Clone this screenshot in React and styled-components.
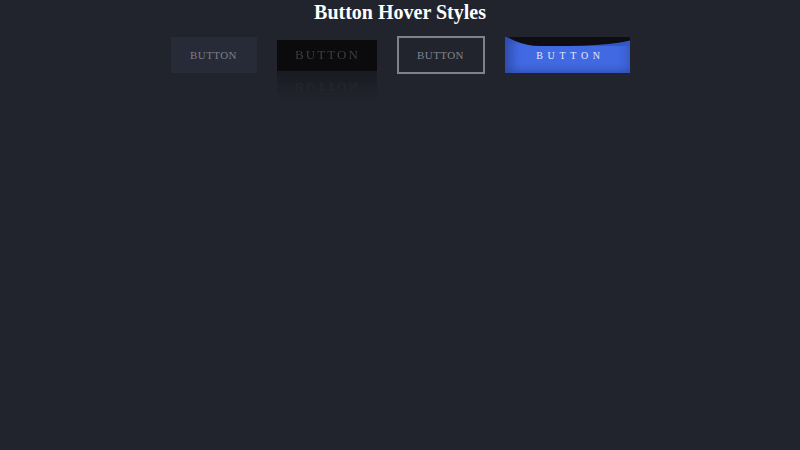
import React from "react";
import styled, { createGlobalStyle } from "styled-components";

const GlobalStyle = createGlobalStyle`
  html, body {
    margin: 0;
    padding: 0;
    background: #21242d;
  }
  body {
    font-family: "Liberation Serif", "Times New Roman", serif;
    width: 800px;
    height: 450px;
    overflow: hidden;
  }
`;

const Page = styled.main`
  display: flex;
  flex-direction: column;
  align-items: center;
`;

const Title = styled.h1`
  margin: 0;
  font-size: 20px;
  line-height: 24px;
  font-weight: 700;
  color: #ffffff;
`;

const Row = styled.div`
  display: flex;
  align-items: center;
  gap: 20px;
  margin-top: 12px;
  height: 38px;
`;

const BaseButton = styled.button`
  font-family: "Liberation Serif", "Times New Roman", serif;
  text-transform: uppercase;
  cursor: pointer;
  padding: 0;
  border: none;
  outline: none;
`;

/* flat, softly tinted tile */
const SoftButton = styled(BaseButton)`
  width: 86px;
  height: 36px;
  background: #272b37;
  color: #7b7e89;
  font-size: 11px;
  letter-spacing: 0.4px;
`;

/* black tile with a mirrored reflection underneath */
const MirrorButton = styled(BaseButton)`
  width: 100px;
  height: 31px;
  padding-left: 2px;
  background: #0b0b0d;
  color: #3d3e42;
  font-size: 13px;
  letter-spacing: 2.1px;
  -webkit-box-reflect: below 0px
    linear-gradient(to bottom, transparent 10%, rgba(255, 255, 255, 0.34));
`;

/* outlined tile */
const OutlineButton = styled(BaseButton)`
  width: 88px;
  height: 38px;
  background: transparent;
  border: 2px solid #7f828a;
  color: #80838c;
  font-size: 11px;
  letter-spacing: 0.4px;
`;

/* royal blue tile with a dark wave sweeping across its top */
const WaveButton = styled(BaseButton)`
  position: relative;
  overflow: hidden;
  isolation: isolate;
  width: 125px;
  height: 36px;
  padding-left: 7px;
  background: #4169e1;
  box-shadow: inset 7px 0 10px rgba(20, 30, 90, 0.35),
    inset -4px 0 8px rgba(20, 30, 90, 0.2);
  color: #e6eaff;
  font-size: 10px;
  letter-spacing: 4.7px;

  &::before,
  &::after {
    content: "";
    position: absolute;
  }

  /* dark crest */
  &::before {
    left: -30px;
    right: -12px;
    top: -60px;
    height: 68.7px;
    background: #0e0e12;
    border-bottom-left-radius: 65px;
    border-bottom-right-radius: 75px 12px;
    z-index: 1;
  }

  /* deeper blue swell trailing under the crest */
  &::after {
    left: 40px;
    right: -20px;
    top: -20px;
    height: 29.3px;
    background: #3456c6;
    border-bottom-left-radius: 40px 10px;
    z-index: 0;
  }
`;

const Label = styled.span`
  position: relative;
  z-index: 2;
`;

export default function App() {
  return (
    <>
      <GlobalStyle />
      <Page>
        <Title>Button Hover Styles</Title>
        <Row>
          <SoftButton>Button</SoftButton>
          <MirrorButton>Button</MirrorButton>
          <OutlineButton>Button</OutlineButton>
          <WaveButton>
            <Label>Button</Label>
          </WaveButton>
        </Row>
      </Page>
    </>
  );
}
